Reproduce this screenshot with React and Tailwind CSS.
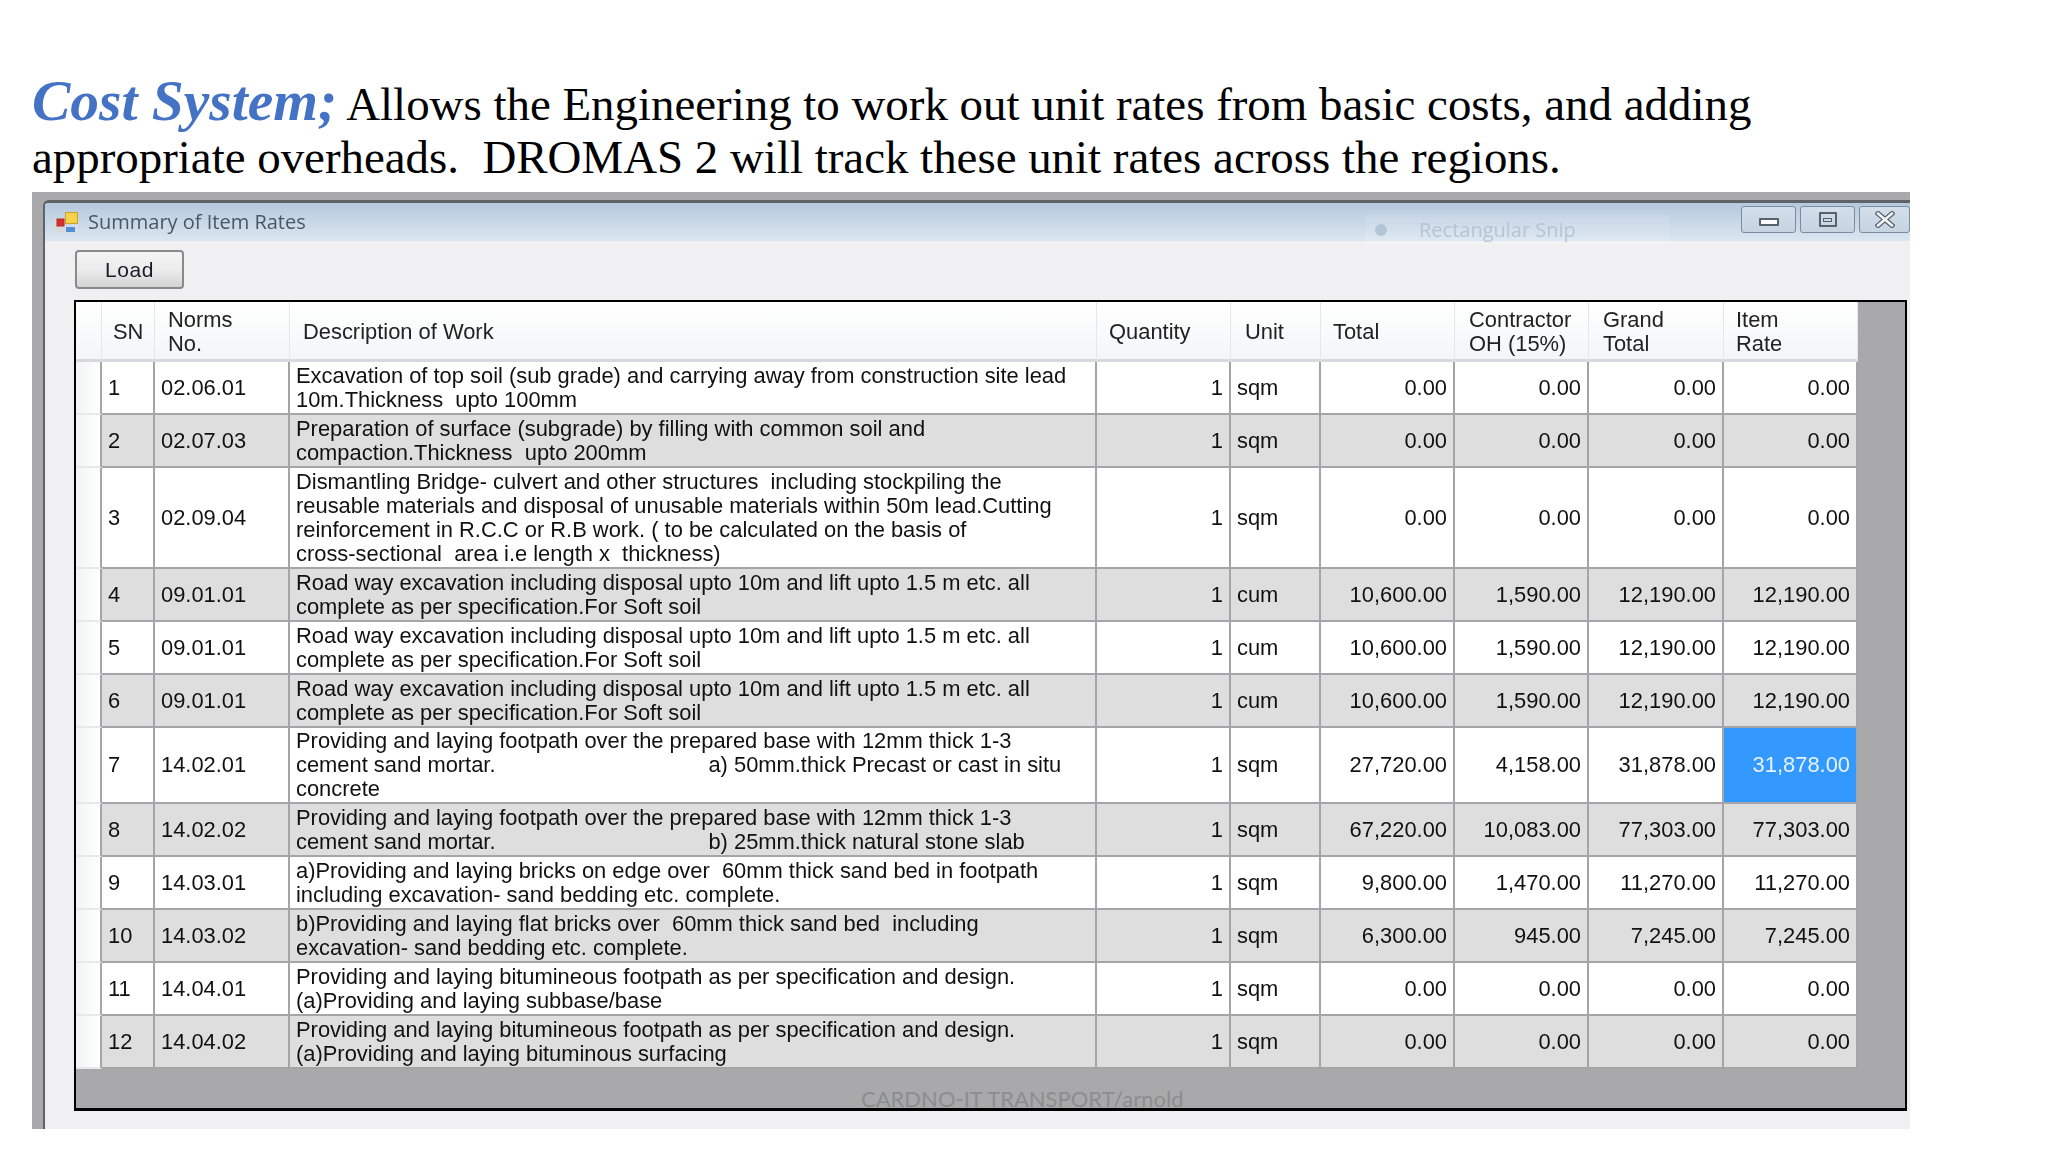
import React from "react";

const rows = [
	{ sn: 1, code: "02.06.01", desc: "Excavation of top soil (sub grade) and carrying away from construction site lead\n10m.Thickness  upto 100mm", unit: "sqm", vals: ["0.00", "0.00", "0.00", "0.00"], h: "h-[53px]" },
	{ sn: 2, code: "02.07.03", desc: "Preparation of surface (subgrade) by filling with common soil and\ncompaction.Thickness  upto 200mm", unit: "sqm", vals: ["0.00", "0.00", "0.00", "0.00"], h: "h-[53px]" },
	{ sn: 3, code: "02.09.04", desc: "Dismantling Bridge- culvert and other structures  including stockpiling the\nreusable materials and disposal of unusable materials within 50m lead.Cutting\nreinforcement in R.C.C or R.B work. ( to be calculated on the basis of\ncross-sectional  area i.e length x  thickness)", unit: "sqm", vals: ["0.00", "0.00", "0.00", "0.00"], h: "h-[101px]" },
	{ sn: 4, code: "09.01.01", desc: "Road way excavation including disposal upto 10m and lift upto 1.5 m etc. all\ncomplete as per specification.For Soft soil", unit: "cum", vals: ["10,600.00", "1,590.00", "12,190.00", "12,190.00"], h: "h-[53px]" },
	{ sn: 5, code: "09.01.01", desc: "Road way excavation including disposal upto 10m and lift upto 1.5 m etc. all\ncomplete as per specification.For Soft soil", unit: "cum", vals: ["10,600.00", "1,590.00", "12,190.00", "12,190.00"], h: "h-[53px]" },
	{ sn: 6, code: "09.01.01", desc: "Road way excavation including disposal upto 10m and lift upto 1.5 m etc. all\ncomplete as per specification.For Soft soil", unit: "cum", vals: ["10,600.00", "1,590.00", "12,190.00", "12,190.00"], h: "h-[53px]" },
	{ sn: 7, code: "14.02.01", desc: "Providing and laying footpath over the prepared base with 12mm thick 1-3\ncement sand mortar.                                   a) 50mm.thick Precast or cast in situ\nconcrete", unit: "sqm", vals: ["27,720.00", "4,158.00", "31,878.00", "31,878.00"], h: "h-[76px]", selected: true },
	{ sn: 8, code: "14.02.02", desc: "Providing and laying footpath over the prepared base with 12mm thick 1-3\ncement sand mortar.                                   b) 25mm.thick natural stone slab", unit: "sqm", vals: ["67,220.00", "10,083.00", "77,303.00", "77,303.00"], h: "h-[53px]" },
	{ sn: 9, code: "14.03.01", desc: "a)Providing and laying bricks on edge over  60mm thick sand bed in footpath\nincluding excavation- sand bedding etc. complete.", unit: "sqm", vals: ["9,800.00", "1,470.00", "11,270.00", "11,270.00"], h: "h-[53px]" },
	{ sn: 10, code: "14.03.02", desc: "b)Providing and laying flat bricks over  60mm thick sand bed  including\nexcavation- sand bedding etc. complete.", unit: "sqm", vals: ["6,300.00", "945.00", "7,245.00", "7,245.00"], h: "h-[53px]" },
	{ sn: 11, code: "14.04.01", desc: "Providing and laying bitumineous footpath as per specification and design.\n(a)Providing and laying subbase/base", unit: "sqm", vals: ["0.00", "0.00", "0.00", "0.00"], h: "h-[53px]" },
	{ sn: 12, code: "14.04.02", desc: "Providing and laying bitumineous footpath as per specification and design.\n(a)Providing and laying bituminous surfacing", unit: "sqm", vals: ["0.00", "0.00", "0.00", "0.00"], h: "h-[53px]" },
];

const headCell = "border-r border-b-[3px] border-r-[#e4e6ea] border-b-[#d5d8dc] bg-gradient-to-b from-white to-[#f4f5f7] pt-[2px] text-left align-middle font-normal leading-[24px] text-[#222]";
const bodyCell = "border-r-2 border-b-2 border-[#a5a5a7] align-middle";

const AppIcon = () => (
	<svg width="25" height="21" viewBox="0 0 25 21" className="shrink-0">
		<rect x="0" y="6" width="11" height="15" fill="#d9d9dc" />
		<rect x="12" y="14" width="12" height="7" fill="#d9dee6" />
		<rect x="3" y="7" width="7" height="7" fill="#d8312c" stroke="#a82a28" />
		<rect x="11.5" y="0.5" width="12" height="11" fill="#f6d24a" stroke="#c9a030" />
		<rect x="12" y="15" width="9" height="5" fill="#4f8fd8" />
	</svg>
);

const WinButton = ({ children, w = "w-[56px]" }) => (
	<div className={`${w} flex h-[27px] items-center justify-center rounded-[3px] border border-[#7d8ba0] bg-gradient-to-b from-[#d3dfeb] to-[#c6d3e1]`}>
		{children}
	</div>
);

export default function App() {
	return (
		<div className="h-[1152px] w-[2048px] overflow-hidden bg-white font-['Liberation_Serif',serif]">
			<div className="whitespace-pre-wrap pl-[32px] pt-[74px] text-[46.9px] leading-[53px] text-black">
				<span className="text-[57.5px] font-bold italic text-[#4472c4]">Cost System;</span> Allows the Engineering to work out unit rates from basic costs, and adding
				<br />
				{"appropriate overheads.  DROMAS 2 will track these unit rates across the regions."}
			</div>

			{/* pasted screenshot of the desktop app */}
			<div className="relative ml-[32px] mt-[8px] h-[937px] w-[1878px] bg-[#a9a9ab] pl-[11px] pt-[8px] font-['Liberation_Sans',sans-serif] blur-[0.4px]">
				<div className="flex h-full flex-col overflow-hidden rounded-tl-[6px] border-l-2 border-t-[3px] border-[#5f6266] bg-[#f0f0f2]">
					<div className="flex h-[38px] items-center gap-[9px] bg-gradient-to-b from-[#b5c9dd] to-[#dbe6f0] pl-[9px] pr-0">
						<AppIcon />
						<span className="font-['Open_Sans',sans-serif] text-[20px] text-[#4a5665]">Summary of Item Rates</span>
						<div className="ml-auto flex items-start gap-[4px] self-start pt-[3px]">
							<WinButton w="w-[55px]">
								<div className="mt-[4px] h-[8px] w-[20px] rounded-[1px] border-2 border-[#59616b] bg-white" />
							</WinButton>
							<WinButton w="w-[55px]">
								<div className="flex h-[15px] w-[18px] items-center justify-center rounded-[1px] border-2 border-[#59616b]">
									<div className="h-[4px] w-[9px] border border-[#59616b]" />
								</div>
							</WinButton>
							<WinButton w="w-[51px]">
								<svg width="20" height="17" viewBox="0 0 20 17">
									<path d="M3 2.5 L17 14.5 M17 2.5 L3 14.5" stroke="#59616b" strokeWidth="5" strokeLinecap="square" />
									<path d="M3 2.5 L17 14.5 M17 2.5 L3 14.5" stroke="#f2f5f8" strokeWidth="2.5" strokeLinecap="square" />
								</svg>
							</WinButton>
						</div>
					</div>

					<div className="flex flex-1 flex-col pl-[29px] pr-[3px]">
						<div className="ml-[1px] mt-[9px] flex h-[39px] w-[109px] items-center justify-center rounded-[4px] border-2 border-[#8a8a8c] bg-gradient-to-b from-[#f4f4f4] via-[#ececec] to-[#d4d4d4] text-[21px] tracking-[0.6px] text-[#1a1a2a]">
							Load
						</div>

						<div className="mb-[18px] mt-[11px] flex-1 border-2 border-b-[3px] border-black bg-[#a9a9ab] text-[21.9px] leading-[24px]">
							<table className="table-fixed border-separate border-spacing-0">
								<colgroup>
									<col className="w-[26px]" />
									<col className="w-[53px]" />
									<col className="w-[135px]" />
									<col className="w-[807px]" />
									<col className="w-[134px]" />
									<col className="w-[90px]" />
									<col className="w-[134px]" />
									<col className="w-[134px]" />
									<col className="w-[135px]" />
									<col className="w-[134px]" />
								</colgroup>
								<thead>
									<tr className="h-[60px]">
										<th className={headCell} />
										<th className={`${headCell} pl-[11px]`}>SN</th>
										<th className={`${headCell} pl-[13px]`}>Norms<br />No.</th>
										<th className={`${headCell} pl-[13px]`}>Description of Work</th>
										<th className={`${headCell} pl-[12px]`}>Quantity</th>
										<th className={`${headCell} pl-[14px]`}>Unit</th>
										<th className={`${headCell} pl-[12px]`}>Total</th>
										<th className={`${headCell} pl-[14px]`}>Contractor<br />OH (15%)</th>
										<th className={`${headCell} pl-[14px]`}>Grand<br />Total</th>
										<th className={`${headCell} pl-[12px]`}>Item<br />Rate</th>
									</tr>
								</thead>
								<tbody className="text-[#111]">
									{rows.map((row) => (
										<tr key={row.sn} className={`${row.h} ${row.sn % 2 === 0 ? "bg-[#dedede]" : "bg-white"}`}>
											<td className="border-r-2 border-b-2 border-r-[#a5a5a7] border-b-[#e8e8ea] bg-gradient-to-r from-[#f2f3f5] to-white" />
											<td className={`${bodyCell} pl-[6px]`}>{row.sn}</td>
											<td className={`${bodyCell} pl-[6px]`}>{row.code}</td>
											<td className={`${bodyCell} whitespace-pre-wrap pl-[6px]`}>{row.desc}</td>
											<td className={`${bodyCell} pr-[6px] text-right`}>1</td>
											<td className={`${bodyCell} pl-[6px]`}>{row.unit}</td>
											{row.vals.map((val, i) => (
												<td key={i} className={`${bodyCell} pr-[6px] text-right ${row.selected && i === 3 ? "bg-[#3399ff] text-[#e8f2ff]" : ""}`}>
													{val}
												</td>
											))}
										</tr>
									))}
								</tbody>
							</table>
						</div>
					</div>
				</div>

				{/* ghosted snipping tool hint over the title bar */}
				<div className="absolute left-[1333px] top-[23px] flex h-[30px] w-[305px] items-center gap-[32px] bg-white/10 pl-[10px] font-['Open_Sans',sans-serif] text-[20px] text-[#b4c5d5]">
					<div className="h-[12px] w-[12px] rounded-full bg-[#b4c5d5]" />
					<span>Rectangular Snip</span>
				</div>
			</div>

			{/* footer watermark sits over the slide */}
			<div className="absolute left-[861px] top-[1085px] font-['Lato',sans-serif] text-[22px] leading-[28px] text-[#8d8d8f]">
				CARDNO-IT TRANSPORT/arnold
			</div>
		</div>
	);
}
